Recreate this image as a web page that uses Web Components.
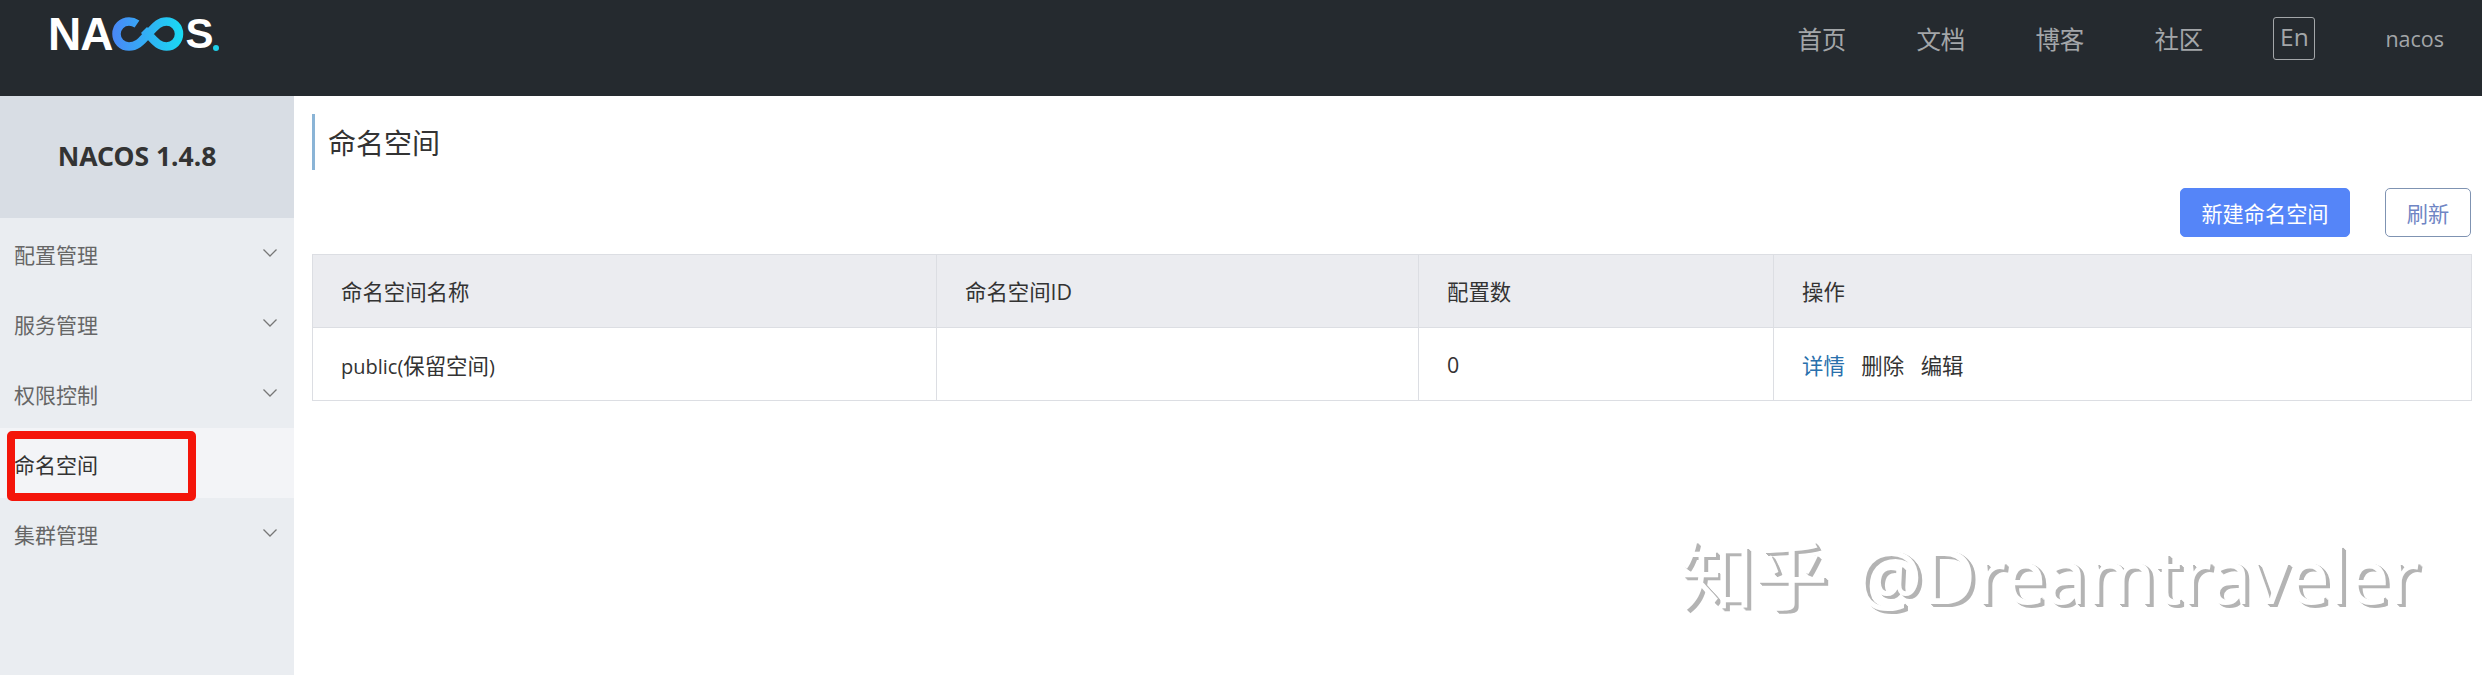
<!DOCTYPE html>
<html lang="zh">
<head>
<meta charset="utf-8">
<title>Nacos</title>
<style>
  html, body { margin: 0; padding: 0; background: #fff; }
  body {
    font-family: "Open Sans", "Noto Sans CJK SC", sans-serif;
    color: #333;
    height: 675px;
    overflow: hidden;
    position: relative;
  }
  .page-body { display: flex; height: 579px; }
</style>
</head>
<body>
<nacos-header></nacos-header>
<div class="page-body">
  <nacos-sidebar version="NACOS 1.4.8">
    <side-item label="配置管理" arrow></side-item>
    <side-item label="服务管理" arrow></side-item>
    <side-item label="权限控制" arrow></side-item>
    <side-item label="命名空间" active></side-item>
    <side-item label="集群管理" arrow></side-item>
  </nacos-sidebar>
  <namespace-page></namespace-page>
</div>
<red-mark></red-mark>
<water-mark></water-mark>

<script>
const CJK_FONT = '"Open Sans", "Noto Sans CJK SC", sans-serif';

// cabecera oscura con logo y navegación
const headerTemplate = document.createElement("template");
headerTemplate.innerHTML = `
<style>
:host { display: block; height: 96px; background: #252a2f; }
.bar { display: flex; justify-content: space-between; align-items: center; height: 76px; padding: 0 38px 0 48px; }
.logo { display: flex; align-items: center; height: 34px; margin-top: -8px; color: #fff; font: 700 46px/34px "Liberation Sans", sans-serif; }
.logo .n { letter-spacing: -1px; }
.logo .a { margin-right: -1px; }
.logo svg { display: block; flex: none; }
.logo .s { margin-left: 1px; font-size: 42px; }
.logo i { width: 6px; height: 6px; border-radius: 50%; background: #1fd0e8; margin: 28px 0 0 0; }
nav { display: flex; align-items: center; font-family: ${CJK_FONT}; color: #a3a6a9; font-size: 24.5px; }
nav a { margin-right: 70px; }
nav .lang { box-sizing: border-box; width: 42px; height: 43px; border: 1px solid #a3a6a9; border-radius: 3px; text-align: center; line-height: 38px; margin-right: 70px; }
nav .user { font-size: 21.500px; }
</style>
<div class="bar">
  <div class="logo">
    <span class="n">N</span><span class="a">A</span>
    <svg width="72" height="34" viewBox="0 0 72 34">
      <defs><linearGradient id="inf" gradientUnits="userSpaceOnUse" x1="0" y1="0" x2="72" y2="0"><stop offset="0" stop-color="#4a86f7"/><stop offset="1" stop-color="#18dcf2"/></linearGradient></defs>
      <path d="M25 7 C22 5 20 4.500 17 4.500 C10 4.500 4.500 10 4.500 17 C4.500 24 10 29.500 17 29.500 C26 29.500 30 23 36 17 C42 11 46 4.500 54.500 4.500 C61.500 4.500 67 10 67 17 C67 24 61.500 29.500 54.500 29.500 C46 29.500 42 23 36 17 L32 13" fill="none" stroke="url(#inf)" stroke-width="8.500"/>
    </svg>
    <span class="s">S</span><i></i>
  </div>
  <nav>
    <a>首页</a><a>文档</a><a>博客</a><a>社区</a>
    <span class="lang">En</span>
    <span class="user">nacos</span>
  </nav>
</div>
`;

class NacosHeader extends HTMLElement {
  constructor() {
    super();
    this.attachShadow({ mode: "open" });
  }

  connectedCallback() {
    this.shadowRoot.appendChild(headerTemplate.content.cloneNode(true));
  }
}

const sidebarTemplate = document.createElement("template");
sidebarTemplate.innerHTML = `
<style>
:host { display: block; flex: none; width: 294px; background: #eaedf1; }
.version { box-sizing: border-box; height: 122px; padding: 0 20px 2px 0; background: #d8dde4; color: #333; display: flex; align-items: center; justify-content: center; font: 700 26.500px "Noto Sans", sans-serif; }
</style>
<div class="version"></div>
<slot></slot>
`;

class NacosSidebar extends HTMLElement {
  constructor() {
    super();
    this.attachShadow({ mode: "open" });
  }

  connectedCallback() {
    const template = sidebarTemplate.content.cloneNode(true);
    template.querySelector(".version").textContent = this.getAttribute("version");
    this.shadowRoot.appendChild(template);
  }
}

const sideItemTemplate = document.createElement("template");
sideItemTemplate.innerHTML = `
<style>
:host { display: flex; align-items: center; justify-content: space-between; box-sizing: border-box; height: 70px; padding: 2px 16px 0 14px; color: #666; font: 21px ${CJK_FONT}; }
:host([active]) { background: #f3f4f7; color: #333; }
svg { display: block; margin-top: -2px; }
</style>
<span></span>
<svg width="16" height="10" viewBox="0 0 16 10"><path d="M1.500 1.500 L8 8 L14.500 1.500" fill="none" stroke="#777" stroke-width="1.300"/></svg>
`;

class SideItem extends HTMLElement {
  constructor() {
    super();
    this.attachShadow({ mode: "open" });
  }

  connectedCallback() {
    const template = sideItemTemplate.content.cloneNode(true);
    template.querySelector("span").textContent = this.getAttribute("label");
    if (!this.hasAttribute("arrow")) {
      template.querySelector("svg").remove();
    }
    this.shadowRoot.appendChild(template);
  }
}

const pageTemplate = document.createElement("template");
pageTemplate.innerHTML = `
<style>
:host { display: block; flex: 1; min-width: 0; padding: 18px 11px 0 18px; font-family: ${CJK_FONT}; }
h1 { margin: 0; height: 56px; box-sizing: border-box; border-left: 3px solid #8ab4d6; padding-left: 13px; font-size: 28px; font-weight: 400; line-height: 58px; color: #333; }
.actions { display: flex; justify-content: flex-end; gap: 35px; margin: 18px 0 17px; }
</style>
<h1>命名空间</h1>
<div class="actions">
  <ns-button primary>新建命名空间</ns-button>
  <ns-button>刷新</ns-button>
</div>
<ns-table></ns-table>
`;

class NamespacePage extends HTMLElement {
  constructor() {
    super();
    this.attachShadow({ mode: "open" });
  }

  connectedCallback() {
    this.shadowRoot.appendChild(pageTemplate.content.cloneNode(true));
  }
}

const buttonTemplate = document.createElement("template");
buttonTemplate.innerHTML = `
<style>
:host { display: flex; align-items: center; justify-content: center; box-sizing: border-box; height: 49px; width: 86px; border: 1px solid #7f93b2; border-radius: 5px; background: #fff; color: #6f85c4; font-size: 21.200px; }
:host([primary]) { width: 170px; border-color: #5585f8; background: #5585f8; color: #fff; }
</style>
<slot></slot>
`;

class NsButton extends HTMLElement {
  constructor() {
    super();
    this.attachShadow({ mode: "open" });
    this.shadowRoot.appendChild(buttonTemplate.content.cloneNode(true));
  }
}

const tableTemplate = document.createElement("template");
tableTemplate.innerHTML = `
<style>
:host { display: block; font-size: 21.400px; color: #333; }
table { width: 2159px; table-layout: fixed; border-collapse: collapse; }
th, td { box-sizing: border-box; border: 1px solid #dcdee3; padding: 0 0 2px 28px; text-align: left; font-weight: 400; }
th { height: 73px; background: #ebecf0; }
td { height: 73px; padding-bottom: 0; }
td a { margin-right: 11px; color: #333; }
td a.detail { color: #2a70ac; }
.latin { font-size: 20px; }
</style>
<table>
  <colgroup><col style="width:624px"><col style="width:482px"><col style="width:355px"><col style="width:698px"></colgroup>
  <tr><th>命名空间名称</th><th>命名空间ID</th><th>配置数</th><th>操作</th></tr>
  <tr><td><span class="latin">public(</span>保留空间<span class="latin">)</span></td><td></td><td>0</td><td><a class="detail">详情</a> <a>删除</a> <a>编辑</a></td></tr>
</table>
`;

class NsTable extends HTMLElement {
  constructor() {
    super();
    this.attachShadow({ mode: "open" });
    this.shadowRoot.appendChild(tableTemplate.content.cloneNode(true));
  }
}

// marca roja encima de la captura
const redMarkTemplate = document.createElement("template");
redMarkTemplate.innerHTML = `
<style>
:host { position: absolute; left: 7px; top: 431px; width: 189px; height: 70px; box-sizing: border-box; border: 8px solid #f4150a; border-radius: 5px; }
</style>
`;

class RedMark extends HTMLElement {
  constructor() {
    super();
    this.attachShadow({ mode: "open" });
    this.shadowRoot.appendChild(redMarkTemplate.content.cloneNode(true));
  }
}

const waterMarkTemplate = document.createElement("template");
waterMarkTemplate.innerHTML = `
<style>
:host { position: absolute; left: 1680px; top: 526px; white-space: nowrap; color: #fff; text-shadow: 2px 1px 0 #b4b4b4, 3px 2px 0 #b4b4b4, 4px 3px 0 #b4b4b4; font: 74px/100px "Noto Sans", "Noto Sans CJK SC", sans-serif; }
.name { margin-left: 28px; letter-spacing: -0.500px; }
</style>
<span>知乎</span><span class="name">@Dreamtraveler</span>
`;

class WaterMark extends HTMLElement {
  constructor() {
    super();
    this.attachShadow({ mode: "open" });
    this.shadowRoot.appendChild(waterMarkTemplate.content.cloneNode(true));
  }
}

customElements.define("ns-button", NsButton);
customElements.define("ns-table", NsTable);
customElements.define("side-item", SideItem);
customElements.define("nacos-header", NacosHeader);
customElements.define("nacos-sidebar", NacosSidebar);
customElements.define("namespace-page", NamespacePage);
customElements.define("red-mark", RedMark);
customElements.define("water-mark", WaterMark);
</script>
</body>
</html>
